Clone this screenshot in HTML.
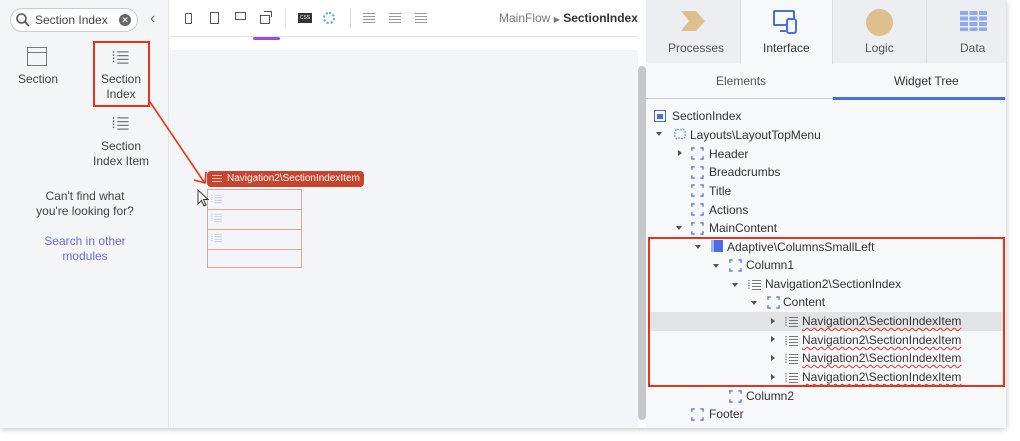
<!DOCTYPE html><html><head><style>
*{margin:0;padding:0;box-sizing:border-box}
body{width:1020px;height:441px;background:#fff;font-family:"Liberation Sans",sans-serif;position:relative;overflow:hidden;color:#333}
.a{position:absolute}
.t{font-size:12px;white-space:nowrap}
.arr{width:0;height:0;border-left:4px solid #555;border-top:3.5px solid transparent;border-bottom:3.5px solid transparent}
.dn{width:0;height:0;border-top:4px solid #555;border-left:3.5px solid transparent;border-right:3.5px solid transparent}
.wavy{text-decoration:underline wavy #d33;text-decoration-thickness:1px;text-underline-offset:2px}
</style></head><body>
<svg width="0" height="0" style="position:absolute">
<symbol id="br" viewBox="0 0 14 14"><path d="M1 4V1H4M10 1H13V4M13 10V13H10M4 13H1V10" fill="none" stroke="#5b7be8" stroke-width="1.5"/></symbol>
<symbol id="li" viewBox="0 0 14 12"><path d="M1 1V11" stroke="#666" stroke-width="1.2" stroke-dasharray="1.2 1.3"/><path d="M4 1.5H13M4 4.5H13M4 7.5H13M4 10.5H13" stroke="#777" stroke-width="1"/></symbol>
<symbol id="lib" viewBox="0 0 14 12"><path d="M1 1V11" stroke="#b9c6e0" stroke-width="1.2" stroke-dasharray="1.2 1.3"/><path d="M4 1.5H13M4 4.5H13M4 7.5H13M4 10.5H13" stroke="#b9c6e0" stroke-width="1"/></symbol>
</svg>
<div class="a" style="left:0;top:0;width:1006px;height:428px;box-shadow:0 1px 6px rgba(0,0,0,.25)"></div>
<!-- left panel -->
<div class="a" style="left:0;top:0;width:169px;height:428px;background:#f4f5f7;border-right:1px solid #e2e3e6"></div>
<div class="a" style="left:10px;top:8px;width:128px;height:24px;border:1px solid #ccc;border-radius:12px;background:#fff"></div>
<svg class="a" style="left:15px;top:12px" width="16" height="16"><circle cx="6.5" cy="6.5" r="4.5" fill="none" stroke="#555" stroke-width="1.6"/><line x1="10" y1="10" x2="14" y2="14" stroke="#555" stroke-width="1.8"/></svg>
<div class="a t" style="left:35px;top:13px;color:#444">Section Index</div>
<div class="a" style="left:119px;top:14px;width:12px;height:12px;border-radius:50%;background:#666;color:#fff;font-size:9px;line-height:12px;text-align:center">✕</div>
<div class="a" style="left:150px;top:10px;font-size:16px;color:#666">‹</div>
<div class="a" style="left:27px;top:47px;width:20px;height:19px;border:1.5px solid #777"><div style="border-bottom:1.5px solid #777;height:5px"></div></div>
<div class="a t" style="left:18px;top:72px;color:#444">Section</div>
<div class="a" style="left:93px;top:41px;width:57px;height:66px;border:2px solid #e8331b"></div>
<svg class="a" style="left:112px;top:50px" width="18" height="15"><use href="#li"/></svg>
<div class="a t" style="left:100px;top:72px;color:#444;text-align:center;width:42px;line-height:15px">Section<br>Index</div>
<svg class="a" style="left:112px;top:116px" width="18" height="15"><use href="#li"/></svg>
<div class="a t" style="left:88px;top:139px;color:#444;text-align:center;width:66px;line-height:15px">Section<br>Index Item</div>
<div class="a t" style="left:20px;top:189px;color:#444;text-align:center;width:130px;line-height:15px">Can't find what<br>you're looking for?</div>
<div class="a t" style="left:20px;top:234px;color:#6b6be0;text-align:center;width:130px;line-height:15px">Search in other<br>modules</div>
<!-- canvas -->
<div class="a" style="left:170px;top:0;width:468px;height:37px;background:#fff;border-bottom:1px solid #e4e4e4"></div>
<div class="a" style="left:170px;top:50px;width:468px;height:378px;background:#f4f5f8"></div>
<div class="a" style="left:253px;top:37px;width:27px;height:3px;background:#9b4fd0;border-radius:2px"></div>
<div class="a" style="left:185px;top:13px;width:7px;height:11px;border:1.3px solid #555;border-radius:1px"></div>
<div class="a" style="left:210px;top:12px;width:9px;height:12px;border:1.3px solid #555"></div>
<div class="a" style="left:235px;top:12px;width:11px;height:8px;border:1.3px solid #555"></div>
<div class="a" style="left:260px;top:15px;width:10px;height:9px;border:1.3px solid #555"></div>
<div class="a" style="left:264px;top:11px;width:8px;height:6px;border:1.3px solid #555;border-bottom:none;border-left:none"></div>
<div class="a" style="left:285px;top:8px;width:1px;height:20px;background:#ddd"></div>
<div class="a" style="left:298px;top:13px;width:14px;height:10px;background:#333;color:#fff;font-size:5px;line-height:10px;text-align:center">CSS</div>
<div class="a" style="left:323px;top:12px;width:12px;height:12px;border-radius:50%;border:2.5px dotted #5b9be8"></div>
<div class="a" style="left:350px;top:8px;width:1px;height:20px;background:#ddd"></div>
<div class="a" style="left:363px;top:13px;width:12px;height:10px;background:repeating-linear-gradient(#999 0 1px,transparent 1px 3px)"></div>
<div class="a" style="left:389px;top:13px;width:12px;height:10px;background:repeating-linear-gradient(#999 0 1px,transparent 1px 3px)"></div>
<div class="a" style="left:415px;top:13px;width:12px;height:10px;background:repeating-linear-gradient(#999 0 1px,transparent 1px 3px)"></div>
<div class="a t" style="left:499px;top:11px;color:#777">MainFlow <span style="font-size:8px">▶</span> <b style="color:#333">SectionIndex</b></div>
<div class="a" style="left:638px;top:66px;width:8px;height:354px;background:#c6c7c9;border-radius:4px"></div>
<svg class="a" style="left:140px;top:100px" width="80" height="90"><line x1="10" y1="2" x2="64" y2="82" stroke="#e8331b" stroke-width="1.6"/><polyline points="54,80 65,83 66,72" fill="none" stroke="#e8331b" stroke-width="1.6"/></svg>
<div class="a" style="left:207px;top:171px;width:157px;height:16px;background:#c9442e;border-radius:4px"></div>
<div class="a" style="left:212px;top:175px;width:10px;height:8px;background:repeating-linear-gradient(#f3c0b6 0 1px,transparent 1px 3px)"></div>
<div class="a" style="left:227px;top:173px;font-size:10px;color:#fff;white-space:nowrap">Navigation2\SectionIndexItem</div>
<div class="a" style="left:207px;top:189px;width:95px;height:79px;border:1px solid #d9a69c;background:repeating-linear-gradient(#f4f5f8 0 19px,#d9a69c 19px 20px)"></div>
<svg class="a" style="left:211px;top:194px" width="12" height="10"><use href="#lib"/></svg>
<svg class="a" style="left:211px;top:213px" width="12" height="10"><use href="#lib"/></svg>
<svg class="a" style="left:211px;top:233px" width="12" height="10"><use href="#lib"/></svg>
<svg class="a" style="left:197px;top:189px" width="14" height="20"><path d="M1 1 L1 15 L4.5 11.5 L7 17 L9 16 L6.5 10.5 L11 10.5 Z" fill="#fff" stroke="#333"/></svg>
<!-- right panel -->
<div class="a" style="left:646px;top:0;width:360px;height:428px;background:#f7f8f9"></div>
<div class="a" style="left:646px;top:0;width:360px;height:63px;background:#eceef1"></div>
<div class="a" style="left:740px;top:0;width:93px;height:64px;background:#f7f8f9;border-left:1px solid #ddd;border-right:1px solid #ddd"></div>
<div class="a" style="left:926px;top:0;width:1px;height:63px;background:#ddd"></div>
<svg class="a" style="left:679px;top:9px" width="28" height="24"><path d="M2 2 H17 L26 12 L17 22 H2 L10 12 Z" fill="#dfbf8e"/></svg>
<svg class="a" style="left:772px;top:9px" width="28" height="26"><rect x="2" y="2" width="20" height="14" rx="1" fill="none" stroke="#4a6ee0" stroke-width="2"/><line x1="8" y1="22" x2="14" y2="22" stroke="#4a6ee0" stroke-width="2"/><rect x="15" y="10" width="9" height="14" rx="2" fill="#f7f8f9" stroke="#4a6ee0" stroke-width="2"/></svg>
<div class="a" style="left:866px;top:9px;width:27px;height:27px;border-radius:50%;background:#e0bf8e"></div>
<div class="a" style="left:960px;top:11px;width:27px;height:20px;background:repeating-linear-gradient(90deg,#8ea9ec 0 8px,transparent 8px 9.5px);-webkit-mask:repeating-linear-gradient(#000 0 4px,transparent 4px 5.5px);mask:repeating-linear-gradient(#000 0 4px,transparent 4px 5.5px)"></div>
<div class="a t" style="left:668px;top:41px;color:#555">Processes</div>
<div class="a t" style="left:763px;top:41px;color:#333">Interface</div>
<div class="a t" style="left:865px;top:41px;color:#555">Logic</div>
<div class="a t" style="left:960px;top:41px;color:#555">Data</div>
<div class="a" style="left:646px;top:98px;width:360px;height:1px;background:#ccc"></div>
<div class="a" style="left:833px;top:97px;width:172px;height:3px;background:#4a6ee0"></div>
<div class="a t" style="left:716px;top:74px;color:#555">Elements</div>
<div class="a t" style="left:894px;top:74px;color:#333">Widget Tree</div>
<!-- tree -->
<div class="a" style="left:648px;top:312px;width:356px;height:19px;background:#e2e3e5"></div>
<div class="a" style="left:648px;top:237px;width:357px;height:150px;border:2px solid #e8331b"></div>
<div class="a" style="left:654px;top:110px;width:12px;height:12px;border:1.5px solid #4a6ee0"><div style="margin:3px 2px 0;height:5px;background:#4a6ee0"></div></div>
<div class="a t" style="left:672px;top:109px">SectionIndex</div>
<div class="a dn" style="left:656px;top:132px"></div>
<svg class="a" style="left:673px;top:127px" width="14" height="14"><path d="M4 2 Q7 4 10 2 Q13 4 12 7 Q13 10 10 12 Q7 10 4 12 Q1 10 2 7 Q1 4 4 2Z" fill="none" stroke="#7a95ea" stroke-width="1.3" stroke-dasharray="2 1"/></svg>
<div class="a t" style="left:690px;top:128px">Layouts\LayoutTopMenu</div>
<div class="a arr" style="left:678px;top:150px"></div>
<svg class="a" style="left:691px;top:147px" width="13" height="13"><use href="#br"/></svg><div class="a t" style="left:709px;top:147px">Header</div>
<svg class="a" style="left:691px;top:166px" width="13" height="13"><use href="#br"/></svg><div class="a t" style="left:709px;top:165px">Breadcrumbs</div>
<svg class="a" style="left:691px;top:184px" width="13" height="13"><use href="#br"/></svg><div class="a t" style="left:709px;top:184px">Title</div>
<svg class="a" style="left:691px;top:203px" width="13" height="13"><use href="#br"/></svg><div class="a t" style="left:709px;top:203px">Actions</div>
<div class="a dn" style="left:676px;top:226px"></div>
<svg class="a" style="left:691px;top:222px" width="13" height="13"><use href="#br"/></svg><div class="a t" style="left:709px;top:221px">MainContent</div>
<div class="a dn" style="left:695px;top:245px"></div>
<div class="a" style="left:711px;top:240px;width:12px;height:12px;background:#4a6ee0;border-left:3px solid #9fb4f0"></div>
<div class="a t" style="left:727px;top:240px">Adaptive\ColumnsSmallLeft</div>
<div class="a dn" style="left:713px;top:264px"></div>
<svg class="a" style="left:729px;top:259px" width="13" height="13"><use href="#br"/></svg><div class="a t" style="left:746px;top:258px">Column1</div>
<div class="a dn" style="left:732px;top:283px"></div>
<svg class="a" style="left:748px;top:279px" width="14" height="12"><use href="#li"/></svg><div class="a t" style="left:765px;top:277px">Navigation2\SectionIndex</div>
<div class="a dn" style="left:751px;top:301px"></div>
<svg class="a" style="left:767px;top:296px" width="13" height="13"><use href="#br"/></svg><div class="a t" style="left:783px;top:295px">Content</div>
<div class="a arr" style="left:771px;top:318px"></div><svg class="a" style="left:785px;top:316px" width="14" height="12"><use href="#li"/></svg><div class="a t wavy" style="left:802px;top:314px">Navigation2\SectionIndexItem</div>
<div class="a arr" style="left:771px;top:336px"></div><svg class="a" style="left:785px;top:335px" width="14" height="12"><use href="#li"/></svg><div class="a t wavy" style="left:802px;top:333px">Navigation2\SectionIndexItem</div>
<div class="a arr" style="left:771px;top:355px"></div><svg class="a" style="left:785px;top:353px" width="14" height="12"><use href="#li"/></svg><div class="a t wavy" style="left:802px;top:351px">Navigation2\SectionIndexItem</div>
<div class="a arr" style="left:771px;top:374px"></div><svg class="a" style="left:785px;top:372px" width="14" height="12"><use href="#li"/></svg><div class="a t wavy" style="left:802px;top:370px">Navigation2\SectionIndexItem</div>
<svg class="a" style="left:729px;top:390px" width="13" height="13"><use href="#br"/></svg><div class="a t" style="left:746px;top:389px">Column2</div>
<svg class="a" style="left:691px;top:408px" width="13" height="13"><use href="#br"/></svg><div class="a t" style="left:709px;top:407px">Footer</div>
</body></html>
